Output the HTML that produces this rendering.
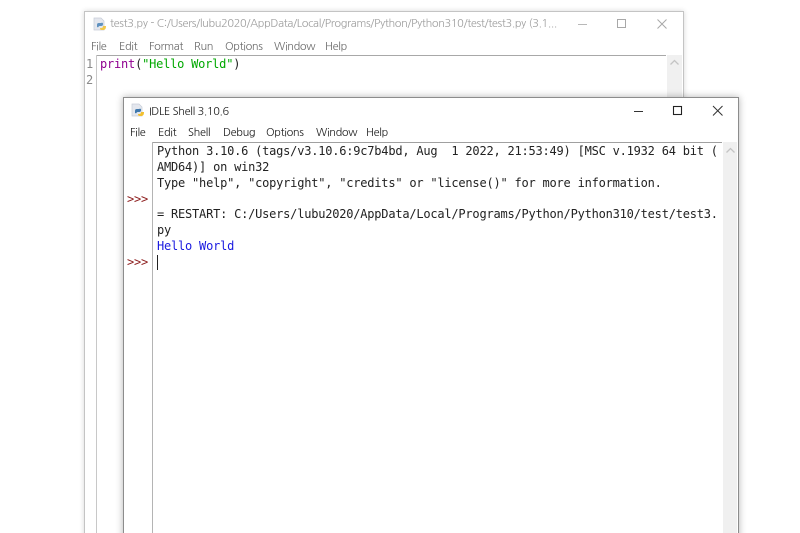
<!DOCTYPE html>
<html><head><meta charset="utf-8">
<style>
html,body{margin:0;padding:0;background:#fff;width:800px;height:533px;overflow:hidden}
#p{position:relative;width:800px;height:533px;overflow:hidden;background:#fff;filter:blur(.3px)}
.a{position:absolute}
.t{position:absolute;white-space:pre;line-height:16px}
.ui{font-family:"NanumGothic","Liberation Sans",sans-serif;font-size:11px;letter-spacing:-.35px}
.m{font-family:"DejaVu Sans Mono","Liberation Mono",monospace;font-size:12px;letter-spacing:-.215px}
</style></head><body><div id="p">

<!-- back window -->
<div class="a" style="left:84px;top:11px;width:598px;height:540px;background:#fff;border:1px solid #c4c4c4;box-shadow:0 0 5px rgba(0,0,0,.16)"></div>
<svg class="a" style="left:93px;top:17px" width="15" height="15" viewBox="0 0 15 15"><path d="M1 1h7l3 3v9H1z" fill="#e4e7ee" stroke="#c6ccd6" stroke-width=".7"/><path d="M4 8c0-2 1-2 3-2s3-1 3 1-1 2-3 2-1 2-3 1z" fill="#5f92c0"/><path d="M7 11c2 0 3 0 3-2h3c0 3-1 4-3 4s-3 0-3-2z" fill="#f2c84a"/></svg>
<div class="t ui" style="left:110px;top:16px;color:#a0a0a0">test3.py - C:/Users/lubu2020/AppData/Local/Programs/Python/Python310/test/test3.py (3.1...</div>
<svg class="a" style="left:570px;top:14px" width="110" height="20"><path d="M8 10.500h9" stroke="#b8b8b8"/><rect x="47.500" y="5.500" width="8" height="8" fill="none" stroke="#a8a8a8"/><path d="M87.500 5.500l9 9M96.500 5.500l-9 9" stroke="#a8a8a8"/></svg>
<div class="t ui" style="left:91px;top:39px;color:#6c6c6c">File</div>
<div class="t ui" style="left:119px;top:39px;color:#6c6c6c">Edit</div>
<div class="t ui" style="left:149px;top:39px;color:#6c6c6c">Format</div>
<div class="t ui" style="left:194px;top:39px;color:#6c6c6c">Run</div>
<div class="t ui" style="left:225px;top:39px;color:#6c6c6c">Options</div>
<div class="t ui" style="left:274px;top:39px;color:#6c6c6c">Window</div>
<div class="t ui" style="left:325px;top:39px;color:#6c6c6c">Help</div>
<div class="a" style="left:96px;top:55px;width:570px;height:1px;background:#a8a8a8"></div>
<div class="a" style="left:96px;top:55px;width:1px;height:490px;background:#c8c8c8"></div>
<div class="a" style="left:667px;top:55px;width:15px;height:490px;background:#f0f0f0"></div>
<svg class="a" style="left:667px;top:57px" width="15" height="12"><path d="M3.500 7.500l4-4 4 4" fill="none" stroke="#c4c4c4" stroke-width="1.300"/></svg>
<div class="t m" style="left:86px;top:56px;color:#8a8a8a">1</div>
<div class="t m" style="left:86px;top:72px;color:#8a8a8a">2</div>
<div class="t m" style="left:100px;top:56px"><span style="color:#900090">print</span><span style="color:#222">(</span><span style="color:#00a800">"Hello World"</span><span style="color:#222">)</span></div>

<!-- front window -->
<div class="a" style="left:123px;top:97px;width:614px;height:460px;background:#fff;border:1px solid #8c8c8c;box-shadow:0 0 7px rgba(0,0,0,.3)"></div>
<svg class="a" style="left:131px;top:103px" width="15" height="15" viewBox="0 0 15 15"><path d="M1 1h7l3 3v9H1z" fill="#e4e7ee" stroke="#c6ccd6" stroke-width=".7"/><path d="M4 8c0-2 1-2 3-2s3-1 3 1-1 2-3 2-1 2-3 1z" fill="#3f78ac"/><path d="M7 11c2 0 3 0 3-2h3c0 3-1 4-3 4s-3 0-3-2z" fill="#f2c030"/></svg>
<div class="t ui" style="left:149px;top:104px;color:#222">IDLE Shell 3.10.6</div>
<svg class="a" style="left:628px;top:100px" width="110" height="22"><path d="M6 11.500h9" stroke="#333"/><rect x="45.500" y="6.500" width="8" height="8" fill="none" stroke="#222" stroke-width="1.100"/><path d="M85 6l9.500 9.500M94.500 6L85 15.500" stroke="#333"/></svg>
<div class="t ui" style="left:130px;top:125px;color:#222">File</div>
<div class="t ui" style="left:158px;top:125px;color:#222">Edit</div>
<div class="t ui" style="left:188px;top:125px;color:#222">Shell</div>
<div class="t ui" style="left:223px;top:125px;color:#222">Debug</div>
<div class="t ui" style="left:266px;top:125px;color:#222">Options</div>
<div class="t ui" style="left:316px;top:125px;color:#222">Window</div>
<div class="t ui" style="left:366px;top:125px;color:#222">Help</div>
<div class="a" style="left:152px;top:142px;width:570px;height:1px;background:#a0a0a0"></div>
<div class="a" style="left:152px;top:142px;width:1px;height:400px;background:#b4b4b4"></div>
<div class="a" style="left:723px;top:142px;width:14px;height:400px;background:#f0f0f0"></div>
<svg class="a" style="left:723px;top:145px" width="15" height="12"><path d="M3.500 7.500l4-4 4 4" fill="none" stroke="#c4c4c4" stroke-width="1.300"/></svg>
<div class="t m" style="left:157px;top:143px;color:#222">Python 3.10.6 (tags/v3.10.6:9c7b4bd, Aug  1 2022, 21:53:49) [MSC v.1932 64 bit (</div>
<div class="t m" style="left:157px;top:159px;color:#222">AMD64)] on win32</div>
<div class="t m" style="left:157px;top:175px;color:#222">Type "help", "copyright", "credits" or "license()" for more information.</div>
<div class="t m" style="left:127px;top:191px;color:#8c1c1c">&gt;&gt;&gt;</div>
<div class="t m" style="left:157px;top:206px;color:#222">= RESTART: C:/Users/lubu2020/AppData/Local/Programs/Python/Python310/test/test3.</div>
<div class="t m" style="left:157px;top:222px;color:#222">py</div>
<div class="t m" style="left:157px;top:238px;color:#1a1ae0">Hello World</div>
<div class="t m" style="left:127px;top:254px;color:#8c1c1c">&gt;&gt;&gt;</div>
<div class="a" style="left:157px;top:255px;width:1px;height:15px;background:#222"></div>
</div></body></html>
